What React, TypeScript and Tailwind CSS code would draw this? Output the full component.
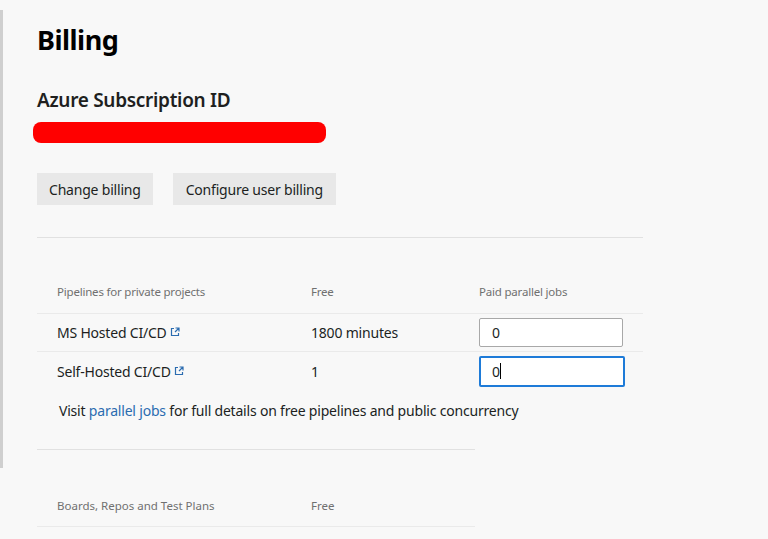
import React from "react";

const Ext = () => (
  <svg width="10" height="10" viewBox="0 0 10 10" className="inline-block ml-[3px] align-[1px]" fill="none" stroke="#2b6cb0" strokeWidth="1.2">
    <path d="M4 1.5H1.5v7h7V6" />
    <path d="M5.5 1h3.5v3.5M9 1L5 5" />
  </svg>
);

export default function App() {
  return (
    <div className="w-[768px] h-[539px] overflow-hidden bg-[#f8f8f8] flex text-[#201f1e]" style={{ fontFamily: '"Noto Sans", "Open Sans", sans-serif' }}>
      <div className="w-[3px] h-[458px] mt-[10px] bg-[#cfcfcf]" />
      <div className="flex-1 pl-[34px] pt-[22px]">
        <h1 className="text-[27px] font-bold leading-[36px] tracking-[-0.5px] text-black">Billing</h1>
        <h2 className="mt-[29px] text-[19px] font-semibold leading-[26px] tracking-[-0.3px]">Azure Subscription ID</h2>
        <div className="mt-[9px] ml-[-4px] w-[293px] h-[21px] rounded-[8px] bg-[#ff0000]" />
        <div className="mt-[30px] flex gap-[20px]">
          <button className="h-[32px] px-[12px] bg-[#e8e8e8] text-[14px] tracking-[-0.2px]">Change billing</button>
          <button className="h-[32px] px-[13px] bg-[#e8e8e8] text-[14px] tracking-[-0.2px]">Configure user billing</button>
        </div>
        <div className="mt-[32px] w-[606px] border-t border-[#e1e1e1]" />
        <div className="mt-[42px] w-[606px] text-[14px] tracking-[-0.2px]">
          <div className="grid grid-cols-[254px_168px_1fr] pl-[20px] h-[34px] items-start text-[11.5px] text-[#707070] border-b border-[#eaeaea]">
            <span className="pt-[3px]">Pipelines for private projects</span>
            <span className="pt-[3px]">Free</span>
            <span className="pt-[3px]">Paid parallel jobs</span>
          </div>
          <div className="grid grid-cols-[254px_168px_1fr] pl-[20px] h-[38px] items-center border-b border-[#eaeaea]">
            <span>MS Hosted CI/CD<Ext /></span>
            <span>1800 minutes</span>
            <div className="w-[144px] h-[29px] bg-white border border-[#a8a8a8] rounded-[2px] pl-[12px] flex items-center">0</div>
          </div>
          <div className="grid grid-cols-[254px_168px_1fr] pl-[20px] h-[38px] items-center">
            <span>Self-Hosted CI/CD<Ext /></span>
            <span>1</span>
            <div className="w-[146px] h-[31px] bg-white border-2 border-[#1e7bd8] rounded-[2px] pl-[11px] flex items-center">0<span className="w-px h-[16px] bg-black" /></div>
          </div>
          <div className="pl-[22px] pt-[10px]">
            Visit <span className="text-[#2b6cb0]">parallel jobs</span> for full details on free pipelines and public concurrency
          </div>
        </div>
        <div className="mt-[28px] w-[438px] border-t border-[#e1e1e1]" />
        <div className="mt-[44px] w-[438px] text-[14px]">
          <div className="grid grid-cols-[254px_1fr] pl-[20px] h-[33px] items-start text-[11.5px] text-[#707070] border-b border-[#eaeaea]">
            <span className="pt-[3px]">Boards, Repos and Test Plans</span>
            <span className="pt-[3px]">Free</span>
          </div>
          <div className="grid grid-cols-[254px_1fr] pl-[20px] h-[38px] items-center">
            <span>Basic</span>
            <span>5</span>
          </div>
        </div>
      </div>
    </div>
  );
}
